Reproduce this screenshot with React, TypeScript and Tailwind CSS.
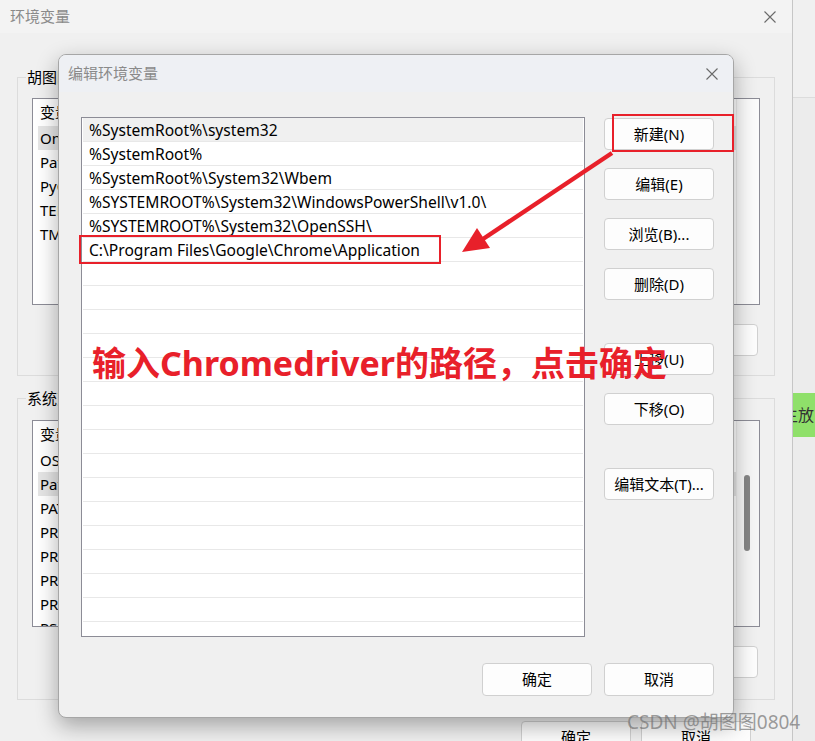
import React from 'react';

const CloseIcon: React.FC<{ className?: string }> = ({ className }) => (
  <svg viewBox="0 0 12 12" className={className} fill="none" stroke="currentColor" strokeWidth="1.1">
    <path d="M0.5 0.5L11.5 11.5M11.5 0.5L0.5 11.5" />
  </svg>
);

const WinButton: React.FC<{ label: string; tall?: boolean; className?: string }> = ({ label, tall, className = '' }) => (
  <div
    className={`flex ${tall ? 'h-[33px]' : 'h-[32px]'} w-[110px] shrink-0 items-center justify-center rounded-[4px] border border-[#d0d0d0] bg-[#fdfdfd] text-[15px] text-black ${className}`}
  >
    {label}
  </div>
);

const VarList: React.FC<{ rows: string[]; selected: number; scroll?: boolean }> = ({ rows, selected, scroll }) => (
  <div className="flex h-[207px] overflow-hidden border border-[#8c8c96] bg-white">
    <div className="min-w-0 flex-1">
      <div className="flex h-[27px] items-center pl-[7px] text-[15px]">
        <span className="w-[160px]">变量</span>
        <span>值</span>
      </div>
      {rows.map((r, i) => (
        <div
          key={i}
          className={`ml-[5px] flex h-[24px] items-center whitespace-nowrap pl-[2px] text-[15px] ${i === selected ? 'bg-[#e5e5e5]' : ''}`}
        >
          {r}
        </div>
      ))}
    </div>
    <div className={`relative w-[23px] border-l border-[#ececec] ${scroll ? 'bg-[#f6f6f6]' : 'bg-[#fbfbfb]'}`}>
      {scroll && <div className="absolute left-[7px] top-[54px] h-[76px] w-[6px] rounded-full bg-[#858585]" />}
    </div>
  </div>
);

const GroupBox: React.FC<{ title: string; children: React.ReactNode; className?: string }> = ({ title, children, className = '' }) => (
  <div className={`relative border border-[#dcdcdc] px-[14px] ${className}`}>
    <span className="absolute left-[8px] top-[-12px] bg-[#f0f0f0] px-[1px] text-[15px] leading-[22px]">{title}</span>
    {children}
  </div>
);

const pathRows = [
  '%SystemRoot%\\system32',
  '%SystemRoot%',
  '%SystemRoot%\\System32\\Wbem',
  '%SYSTEMROOT%\\System32\\WindowsPowerShell\\v1.0\\',
  '%SYSTEMROOT%\\System32\\OpenSSH\\',
  'C:\\Program Files\\Google\\Chrome\\Application',
];

export default function App() {
  const listRows = Array.from({ length: 22 }, (_, i) => pathRows[i] ?? '');

  return (
    <div className="relative h-[741px] w-[815px] overflow-hidden bg-[#ebebeb] font-['Noto_Sans','Noto_Sans_CJK_SC',sans-serif] text-black">
      {/* window on the right, mostly hidden */}
      <div className="absolute left-[793px] top-0 flex h-full w-[22px] flex-col bg-[#ececec]">
        <div className="h-[98px] shrink-0 border-b border-[#dcdcdc] bg-[#f0f0f0]" />
        <div className="mt-[295px] flex h-[44px] items-center overflow-hidden bg-[#8fe06a]">
          <span className="ml-[-11px] whitespace-nowrap text-[16px] text-[#333]">主放</span>
        </div>
      </div>

      {/* background window: 环境变量 */}
      <div className="absolute left-0 top-0 flex h-[780px] w-[793px] flex-col rounded-tl-[8px] border-r border-[#c6c6c6] bg-[#f0f0f0]">
        <div className="flex h-[33px] shrink-0 items-center justify-between bg-[#f3f3f3] pl-[10px] pr-[16px] text-[15px] text-[#8a8a8a]">
          <span>环境变量</span>
          <CloseIcon className="h-[12px] w-[12px] text-[#6a6a6a]" />
        </div>
        <div className="flex flex-col px-[17px] pt-[44px]">
          <GroupBox title="胡图图的用户变量(U)" className="pb-[19px] pt-[20px]">
            <VarList rows={['OneDrive', 'Path', 'PyCharm', 'TEMP', 'TMP']} selected={0} />
            <div className="mt-[19px] flex justify-end gap-[10px] pr-[2px]">
              <WinButton label="新建(N)..." />
              <WinButton label="编辑(E)..." />
              <WinButton label="删除(D)" />
            </div>
          </GroupBox>
          <GroupBox title="系统变量(S)" className="mt-[22px] pb-[21px] pt-[21px]">
            <VarList
              rows={[
                'OS',
                'Path',
                'PATHEXT',
                'PROCESSOR_ARCHITECTURE',
                'PROCESSOR_IDENTIFIER',
                'PROCESSOR_LEVEL',
                'PROCESSOR_REVISION',
                'PSModulePath',
              ]}
              selected={1}
              scroll
            />
            <div className="mt-[19px] flex justify-end gap-[10px] pr-[2px]">
              <WinButton label="新建(W)..." />
              <WinButton label="编辑(I)..." />
              <WinButton label="删除(L)" />
            </div>
          </GroupBox>
          <div className="mt-[21px] flex justify-end gap-[10px] pr-[24px]">
            <WinButton label="确定" tall />
            <WinButton label="取消" tall />
          </div>
        </div>
      </div>

      {/* dialog: 编辑环境变量 */}
      <div className="absolute left-[58px] top-[54px] flex h-[664px] w-[676px] flex-col overflow-hidden rounded-[8px] border border-[#a6a6a6] bg-[#f0f0f0] shadow-[0_8px_22px_rgba(0,0,0,0.32)]">
        <div className="flex h-[37px] shrink-0 items-center justify-between bg-[#eef0f4] pl-[9px] pr-[15px] text-[15px] text-[#8a8a8a]">
          <span>编辑环境变量</span>
          <CloseIcon className="h-[12px] w-[12px] text-[#6a6a6a]" />
        </div>
        <div className="flex pl-[22px] pt-[25px]">
          <div className="h-[520px] w-[504px] overflow-hidden border border-[#8c8c96] bg-white">
            {listRows.map((r, i) => (
              <div
                key={i}
                className={`mx-[1px] flex h-[24px] items-center whitespace-nowrap border-b border-[#e8e8e8] pl-[6px] pt-[3px] text-[15.6px] ${i === 0 ? 'bg-[#f0f0f0]' : ''}`}
              >
                {r}
              </div>
            ))}
          </div>
          <div className="ml-[19px] flex flex-col pt-[1px]">
            <WinButton label="新建(N)" />
            <WinButton label="编辑(E)" className="mt-[18px]" />
            <WinButton label="浏览(B)..." className="mt-[18px]" />
            <WinButton label="删除(D)" className="mt-[18px]" />
            <WinButton label="上移(U)" className="mt-[43px]" />
            <WinButton label="下移(O)" className="mt-[18px]" />
            <WinButton label="编辑文本(T)..." className="mt-[43px]" />
          </div>
        </div>
        <div className="mt-[26px] flex justify-end gap-[12px] pr-[19px]">
          <WinButton label="确定" tall />
          <WinButton label="取消" tall />
        </div>
      </div>

      {/* red annotations */}
      <div className="absolute left-[79px] top-[235px] h-[29px] w-[362px] border-2 border-[#e8202a]" />
      <div className="absolute left-[612px] top-[114px] h-[38px] w-[122px] border-2 border-[#e8202a]" />
      <svg className="pointer-events-none absolute left-0 top-0" width="815" height="741" viewBox="0 0 815 741">
        <line x1="612" y1="153" x2="483" y2="239" stroke="#e8202a" strokeWidth="4.5" />
        <polygon points="462,252 477,228 490,248" fill="#e8202a" />
      </svg>
      <div className="absolute left-[92px] top-[341px] whitespace-nowrap text-[34px] font-bold leading-[44px] text-[#e8202a]">
        输入Chromedriver的路径，点击确定
      </div>

      {/* watermark */}
      <div className="absolute left-[627px] top-[709px] whitespace-nowrap text-[19px] leading-[26px] text-[rgba(115,115,115,0.7)]">
        CSDN @胡图图0804
      </div>
    </div>
  );
}
